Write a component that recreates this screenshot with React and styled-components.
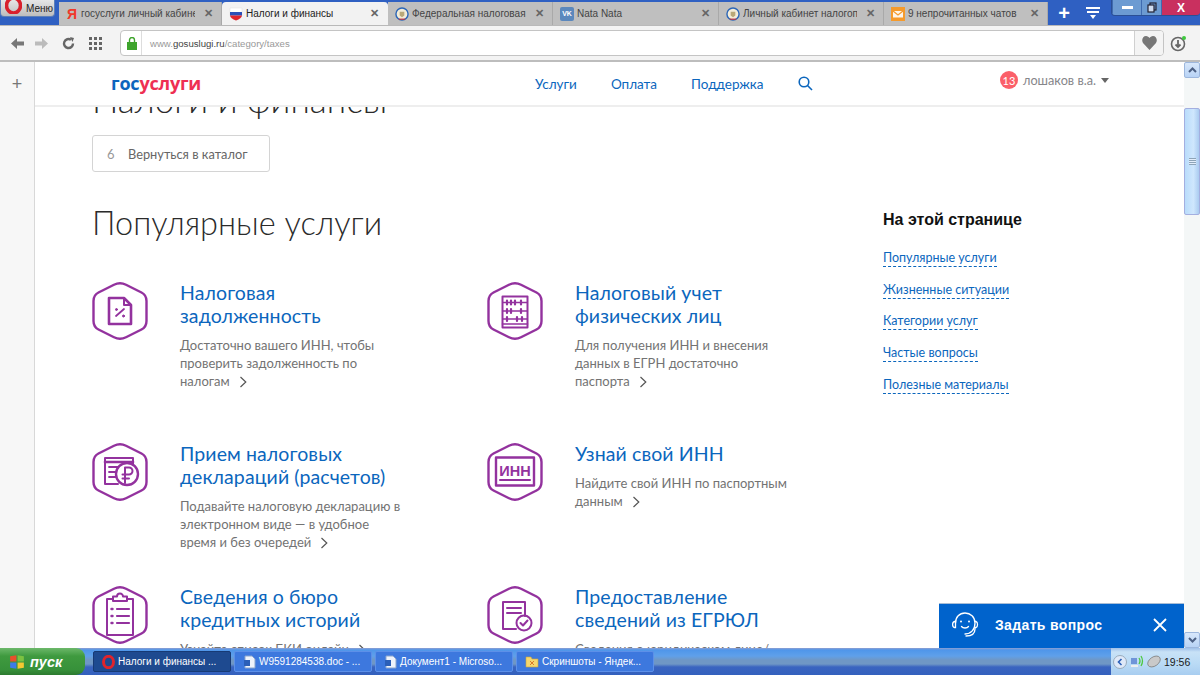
import React from 'react';
import styled, { createGlobalStyle } from 'styled-components';

const Global = createGlobalStyle`
  html, body { margin: 0; padding: 0; width: 1200px; height: 675px; overflow: hidden; background: #fff; }
  * { box-sizing: border-box; }
`;

const Screen = styled.div`
  width: 1200px; height: 675px; display: flex; flex-direction: column; overflow: hidden;
  font-family: "Liberation Sans", Arial, sans-serif; position: relative;
`;

/* ---------- browser chrome ---------- */
const TabBar = styled.div`
  height: 26px; flex: none; display: flex; align-items: flex-end; background: #2f60c2;
  border-bottom: 1px solid #b9b9b9;
`;
const MenuButton = styled.div`
  width: 55px; height: 17px; align-self: flex-start; flex: none; display: flex; align-items: center; gap: 4px;
  background: linear-gradient(#e6e6e6, #bdbdbd); border: 1px solid #5d7fb8; border-top: 0; border-radius: 0 0 4px 4px;
  font-size: 10px; color: #222; padding-left: 4px; margin-right: 4px; overflow: hidden;
`;
const Tab = styled.div`
  width: ${p => p.$w}px; height: 23px; flex: none; display: flex; align-items: center; padding: 0 8px 0 7px; gap: 3px;
  background: ${p => (p.$active ? '#f2f2f2' : '#bfbfbf')};
  border-right: 1px solid ${p => (p.$active ? '#f2f2f2' : '#a9a9a9')};
  border-radius: ${p => (p.$active ? '4px 4px 0 0' : '0')};
  color: ${p => (p.$active ? '#222' : '#444')}; font-size: 10px; white-space: nowrap;
`;
const TabTitle = styled.span`flex: 1; min-width: 0; overflow: hidden; margin-right: 6px;`;
const TabClose = styled.span`font-size: 11px; font-weight: 700; color: #666; line-height: 1; flex: none;`;
const FaviconBox = styled.span`
  width: ${p => p.$w || 14}px; height: 14px; flex: none; display: flex; align-items: center; justify-content: center;
  border-radius: 2px; font-size: ${p => p.$size || 8}px; font-weight: 700; color: ${p => p.$fg || '#fff'}; background: ${p => p.$bg || 'transparent'};
`;
const NewTab = styled.span`
  width: 30px; margin-left: 1px; text-align: center; color: #fff; font-size: 20px; font-weight: 700; line-height: 22px; height: 23px;
`;
const TabMenu = styled.span`width: 28px; height: 23px; display: flex; align-items: center; justify-content: center;`;
const WindowButtons = styled.div`
  margin-left: auto; align-self: flex-start; display: flex; height: 16px; flex: none; border-radius: 0 0 4px 4px; overflow: hidden;
  border: 1px solid #2a4f95; border-top: 0; border-right: 0;
`;
const WinBtn = styled.div`
  width: ${p => p.$w}px; display: flex; align-items: center; justify-content: center; color: #fff; font-weight: 700; font-size: 12px;
  background: ${p => p.$bg}; border-left: 1px solid #3f6bb0;
`;

const AddressRow = styled.div`
  height: 36px; flex: none; display: flex; align-items: center; background: #f3f3f3; border-bottom: 2px solid #bdbdbd;
  padding: 0 8px 0 0;
`;
const NavIcons = styled.div`width: 120px; flex: none; display: flex; align-items: center; padding-left: 11px; gap: 11px;`;
const Field = styled.div`
  flex: 1; height: 26px; display: flex; align-items: center; background: #fff; border: 1px solid #c4c4c4; border-radius: 4px; overflow: hidden;
  font-size: 9.6px; color: #999;
`;
const Lock = styled.span`width: 20px; height: 100%; display: flex; align-items: center; justify-content: center; border-right: 1px solid #ddd; margin-left: 1px;`;
const Url = styled.span`padding-left: 8px; b { color: #444; font-weight: 400; }`;
const Heart = styled.span`
  margin-left: auto; width: 29px; height: 100%; display: flex; align-items: center; justify-content: center;
  background: #f4f4f4; border-left: 1px solid #d0d0d0;
`;
const UpdateIcon = styled.span`width: 28px; flex: none; display: flex; justify-content: center; margin-left: 0;`;

/* ---------- window body ---------- */
const Body = styled.div`flex: 1; min-height: 0; display: flex; position: relative;`;
const SidePanel = styled.div`
  width: 35px; flex: none; background: #f7f7f7; border-right: 1px solid #d8d8d8; display: flex; justify-content: center;
  padding-top: 9px; color: #777; font-size: 18px; line-height: 26px;
`;
const Page = styled.div`flex: 1; min-width: 0; position: relative; overflow: hidden; background: #fff; font-family: Lato, "Open Sans", sans-serif;`;
const Header = styled.header`
  position: absolute; left: 0; right: 0; top: 0; height: 45px; background: #fff; border-bottom: 2px solid #eeeeee; z-index: 2;
  display: flex; align-items: center; padding: 0 0 0 76px;
`;
const Logo = styled.div`
  font-family: "Open Sans", sans-serif; font-weight: 700; font-size: 18px; letter-spacing: -0.2px; width: 424px; flex: none; margin-top: -1px; color: #ee2f53;
  span { color: #0d65bd; }
`;
const NavLink = styled.a`
  font-size: 13.5px; color: #0b66bd; margin-right: 34px;
`;
const SearchIcon = styled.span`display: flex; width: 200px; flex: none;`;
const User = styled.div`display: flex; align-items: center; color: #86868a; font-size: 12.7px; position: absolute; left: 965px; top: 9px;`;
const Badge = styled.span`
  width: 18px; height: 18px; border-radius: 50%; background: #fb5f69; color: #fff; font-size: 11px; display: flex; align-items: center; justify-content: center; margin-right: 5px;
`;
const Caret = styled.span`
  width: 0; height: 0; border: 4px solid transparent; border-top: 5px solid #666; border-bottom: 0; margin-left: 5px;
`;

const Content = styled.main`padding: 17px 0 0 57px; display: flex;`;
const MainCol = styled.div`width: 791px; flex: none;`;
const H1 = styled.h1`
  margin: 0; font-weight: 300; font-size: 35px; line-height: 40px; color: #2b2b2b; white-space: nowrap;
`;
const H2 = styled.h2`
  margin: 0; font-weight: 300; font-size: 32.5px; line-height: 38px; color: #2b2b2b; white-space: nowrap;
`;
const BackButton = styled.div`
  width: 178px; height: 37px; margin: 16px 0 32px; border: 1px solid #d4d4d4; border-radius: 3px; display: flex; align-items: center;
  font-size: 12.8px; color: #666; padding-left: 14px;
  i { font-style: normal; color: #999; width: 21px; font-size: 13px; }
`;
const Grid = styled.div`
  margin-top: 39px; display: grid; grid-template-columns: 395px 395px; grid-template-rows: 161px 143px auto;
`;
const Item = styled.article`display: flex; align-items: flex-start;`;
const HexWrap = styled.span`width: 88px; flex: none; display: block;`;
const ItemText = styled.div`width: 230px; flex: none;`;
const ItemTitle = styled.a`display: block; font-size: 19.5px; line-height: 23px; color: #0b66bd; margin-bottom: 9px; letter-spacing: 0.1px;`;
const ItemDesc = styled.p`margin: 0; font-size: 13px; line-height: 18px; color: #737373; white-space: nowrap;`;
const Chevron = styled.svg`width: 8px; height: 12px; margin-left: 9px; vertical-align: -2px;`;

const Aside = styled.aside`padding-top: 132px; width: 200px; flex: none;`;
const AsideTitle = styled.div`font-family: "Liberation Sans", sans-serif; font-size: 16px; font-weight: 700; color: #111; line-height: 18px; margin-bottom: 20px;`;
const AsideList = styled.div`display: flex; flex-direction: column; gap: 13.7px; align-items: flex-start;`;
const AsideLink = styled.a`font-size: 12.5px; line-height: 18px; color: #0b66bd; border-bottom: 1px dashed #0b66bd; height: 18px;`;

const Scrollbar = styled.div`
  width: 16px; flex: none; background: #f4f7f7; display: flex; flex-direction: column; justify-content: space-between; position: relative;
`;
const ScrollBtn = styled.div`
  height: 16px; background: linear-gradient(#d8e8fb, #b8d3f5); border: 1px solid #9db7dd; border-radius: 2px; display: flex; align-items: center; justify-content: center;
`;
const Thumb = styled.div`
  position: absolute; left: 0; right: 0; top: 46px; height: 107px; background: linear-gradient(90deg, #b9dcfb, #cfe7fd 60%, #aacbf0);
  border: 1px solid #a3afe0; border-radius: 2px; display: flex; align-items: center; justify-content: center;
`;
const Grip = styled.div`width: 7px; height: 7px; background: repeating-linear-gradient(#8da4b8 0 1px, #e3eefb 1px 2px);`;

const Chat = styled.div`
  position: absolute; left: 939px; top: 541px; width: 245px; height: 45px; background: #0063cc; color: #fff; z-index: 3; display: flex; align-items: center; padding: 0 0 2px 12px;
  font-size: 14px; font-weight: 700; letter-spacing: 0.35px;
  border-top: 1px solid #a8bdd6;
`;
const ChatText = styled.span`margin-left: 16px; flex: 1;`;
const ChatClose = styled.svg`width: 14px; height: 14px; margin-right: 17px;`;

/* ---------- taskbar ---------- */
const Taskbar = styled.footer`
  height: 27px; flex: none; display: flex; align-items: center;
  background: linear-gradient(#8f9fd0 0, #4f96ea 2px, #5fa0ea 8px, #6f97c5 12px, #6f97c5 16px, #3a64c0 19px, #3360bd 100%);
`;
const Start = styled.div`
  width: 85px; height: 100%; flex: none; display: flex; align-items: center; gap: 5px; padding-left: 9px; color: #fff; font-weight: 700; font-style: italic; font-size: 14.5px;
  background: linear-gradient(#6cb86a, #3f9a3f 30%, #37913a 80%, #2c7a2f); border-radius: 0 9px 9px 0;
`;
const TaskBtn = styled.div`
  width: 138px; height: 21px; margin-right: 3px; flex: none; display: flex; align-items: center; gap: 3px; padding-left: 8px; color: #fff; font-size: 10px; white-space: nowrap; overflow: hidden;
  background: ${p => (p.$active ? '#1e4a90' : '#3d78de')}; border-radius: 2px; border: 1px solid ${p => (p.$active ? '#173a75' : '#5d90e8')};
`;
const Tray = styled.div`
  margin-left: auto; width: 89px; height: 100%; flex: none; display: flex; align-items: center; padding-left: 2px; gap: 3px; color: #1a1a1a; font-size: 10.5px;
  background: linear-gradient(#9fbfe8, #c8e2f7 4px, #b9daf5 60%, #a8cdf0);
`;
const Clock = styled.span`margin-left: auto; margin-right: 12px;`;

/* ---------- icons ---------- */
const P = '#93329e';
const HEX = 'M22 3.8Q28 .8 34 3.8L49.5 11.5Q54.5 14 54.5 20V40Q54.5 46 49.5 48.5L34 56.2Q28 59.2 22 56.2L6.5 48.5Q1.5 46 1.5 40V20Q1.5 14 6.5 11.5Z';
const Hex = ({ children }) => (
  <svg width="56" height="60" viewBox="0 0 56 60" fill="none" stroke={P} strokeWidth="2.4" strokeLinejoin="round" strokeLinecap="round" style={{ display: 'block' }}>
    <path d={HEX} />
    {children}
  </svg>
);
const Percent = () => (
  <Hex>
    <path d="M17 17H32L39 24V43H17Z" strokeWidth="2.6" /><path d="M32 17V24H39" strokeWidth="2" />
    <path d="M24 35L32 28" strokeWidth="1.8" /><circle cx="24.5" cy="28.5" r="1" fill={P} strokeWidth="1" /><circle cx="31.5" cy="35" r="1" fill={P} strokeWidth="1" />
  </Hex>
);
const Abacus = () => (
  <Hex>
    <rect x="15.5" y="15.5" width="25" height="31" strokeWidth="2" />
    <path d="M16 21.5H40M16 30H40M16 38H40" strokeWidth="1.3" />
    <path d="M20 19.5V23.5M24 19.5V23.5M28 19.5V23.5M34 19.5V23.5M20 28V32M24 28V32M34 28V32M20 36V40M30 36V40M35 36V40" strokeWidth="2.2" />
    <path d="M15.5 43H40.5" strokeWidth="1.6" />
  </Hex>
);
const Declaration = () => (
  <Hex>
    <path d="M26 42H13V16H41V22" strokeWidth="2" />
    <path d="M13 20H41" strokeWidth="2.6" />
    <path d="M17 25H26M17 30H24M17 35H24" strokeWidth="1.8" />
    <circle cx="35" cy="32" r="11" strokeWidth="2.4" />
    <path d="M33 41V25.5H37A3.5 3.5 0 0 1 37 32.5H30.5M30.5 36.5H37" strokeWidth="2" />
  </Hex>
);
const HexLabel = styled.text`font-family: "Liberation Sans", sans-serif; font-weight: 700; font-size: 14.5px; fill: ${P}; stroke: none;`;
const Inn = () => (
  <Hex>
    <rect x="9" y="15.5" width="38" height="28" strokeWidth="2.4" />
    <HexLabel x="28" y="33.5" textAnchor="middle">ИНН</HexLabel>
    <path d="M13 38H43" strokeWidth="2" />
  </Hex>
);
const Clipboard = () => (
  <Hex>
    <path d="M20 14H15V50H41V14H36" strokeWidth="2" />
    <path d="M21 16V11.5H25A3 3 0 0 1 31 11.5H35V16Z" strokeWidth="2" />
    <path d="M19.5 24H20.5M19.5 31H20.5M19.5 38H20.5" strokeWidth="2.4" />
    <path d="M25 24H37M25 31H37M25 38H37" strokeWidth="2.2" />
  </Hex>
);
const Certificate = () => (
  <Hex>
    <path d="M29 44H16V17H38V31" strokeWidth="2" />
    <path d="M20 23H34M20 28H34" strokeWidth="2" />
    <circle cx="37" cy="38" r="7.5" strokeWidth="2" />
    <path d="M33.5 38L36 40.5L40.5 35.5" strokeWidth="2" />
  </Hex>
);
const Chev = () => (
  <Chevron viewBox="0 0 8 12" fill="none" stroke="#555" strokeWidth="1.2"><path d="M1.5 1L6.8 6L1.5 11" /></Chevron>
);
const Headset = () => (
  <svg width="28" height="28" viewBox="0 0 28 28" fill="none" stroke="#fff" strokeWidth="1.3" strokeLinecap="round">
    <path d="M4.5 12C4.5 6 8.5 2 14 2S24 6 24 12C24 18.5 20 23 14 23" />
    <path d="M4.5 10.5H3.5C1 11 1 16 3.5 16.5H4.5Z" />
    <path d="M24 10.5H25C27 11 27 16 25 16.5H24V18C24 22 21 25 15 25" />
    <circle cx="10" cy="10.5" r="1" fill="#fff" stroke="none" /><circle cx="18" cy="10.5" r="1" fill="#fff" stroke="none" />
    <path d="M10.5 15.5C12 17.5 16 17.5 17.5 15.5" />
  </svg>
);
const FlagIcon = () => (
  <svg width="14" height="14" viewBox="0 0 14 14" style={{ flex: 'none' }}><path d="M1 1H13V8Q13 11.5 7 13.5Q1 11.5 1 8Z" fill="#fff" stroke="#ddd" strokeWidth=".5" /><path d="M1 5H13V8.6H1Z" fill="#2b50b8" /><path d="M1 8.6H13Q12.5 11.6 7 13.5Q1.5 11.6 1 8.6Z" fill="#e0242c" /></svg>
);
const FnsIcon = () => (
  <svg width="14" height="14" viewBox="0 0 15 15" style={{ flex: 'none' }}><circle cx="7.5" cy="7.5" r="6.5" fill="#f3ecd8" stroke="#2b66b8" strokeWidth="1.5" /><path d="M5 5H10V9L7.5 11L5 9Z" fill="#b9a878" /><path d="M4 13H11" stroke="#c9343c" strokeWidth="1.2" /></svg>
);
const MailIcon = () => (
  <svg width="14" height="14" viewBox="0 0 14 14" style={{ flex: 'none' }}><rect width="14" height="14" fill="#f59a2c" /><path d="M2 4H12V10.5H2Z" fill="#fff" opacity=".9" /><path d="M2 4L7 8L12 4" fill="none" stroke="#f59a2c" strokeWidth="1.2" /></svg>
);
const OperaO = () => (
  <svg width="17" height="17" viewBox="0 0 17 17" style={{ flex: 'none', marginTop: '-6px' }}><ellipse cx="8.5" cy="8.5" rx="7" ry="7.5" fill="none" stroke="#d8202c" strokeWidth="3.6" /></svg>
);
const SmallOpera = () => (
  <svg width="13" height="14" viewBox="0 0 13 14" style={{ flex: 'none' }}><ellipse cx="6.5" cy="7" rx="5" ry="5.7" fill="none" stroke="#e0242c" strokeWidth="3" /></svg>
);
const DocIcon = () => (
  <svg width="13" height="14" viewBox="0 0 13 14" style={{ flex: 'none' }}><path d="M2 1H9L12 4V13H2Z" fill="#eef3fb" stroke="#8aa4cc" /><path d="M1 5H7V11H1Z" fill="#2b5fb8" /></svg>
);
const FolderIcon = () => (
  <svg width="14" height="13" viewBox="0 0 14 13" style={{ flex: 'none' }}><path d="M1 2H6L7 4H13V12H1Z" fill="#f5d76e" stroke="#c9a53a" strokeWidth=".6" /><path d="M5 6L9 10M9 6L5 10" stroke="#d9792a" strokeWidth="1" /></svg>
);
const WinFlag = () => (
  <svg width="16" height="16" viewBox="0 0 14 14" style={{ flex: 'none' }}><path d="M1 2L6.5 1V6.5H1Z" fill="#e8502c" /><path d="M7.5 1L13 2V6.5H7.5Z" fill="#7cc242" /><path d="M1 7.5H6.5V13L1 12Z" fill="#3f7be8" /><path d="M7.5 7.5H13V12L7.5 13Z" fill="#f5c832" /></svg>
);

const tabs = [
  { w: 163, title: 'госуслуги личный кабинет', icon: <FaviconBox $fg="#f0382a" $w={12} $size={14}>Я</FaviconBox> },
  { w: 166, title: 'Налоги и финансы', icon: <FlagIcon />, active: true },
  { w: 165, title: 'Федеральная налоговая с', icon: <FnsIcon /> },
  { w: 166, title: 'Nata Nata', icon: <FaviconBox $bg="#5b88bd" $size={7}>VK</FaviconBox> },
  { w: 165, title: 'Личный кабинет налогопл', icon: <FnsIcon /> },
  { w: 164, title: '9 непрочитанных чатов', icon: <MailIcon /> },
];

const items = [
  { icon: <Percent />, title: ['Налоговая', 'задолженность'], desc: ['Достаточно вашего ИНН, чтобы', 'проверить задолженность по', 'налогам'] },
  { icon: <Abacus />, title: ['Налоговый учет', 'физических лиц'], desc: ['Для получения ИНН и внесения', 'данных в ЕГРН достаточно', 'паспорта'] },
  { icon: <Declaration />, title: ['Прием налоговых', 'деклараций (расчетов)'], desc: ['Подавайте налоговую декларацию в', 'электронном виде — в удобное', 'время и без очередей'] },
  { icon: <Inn />, title: ['Узнай свой ИНН'], desc: ['Найдите свой ИНН по паспортным', 'данным'] },
  { icon: <Clipboard />, title: ['Сведения о бюро', 'кредитных историй'], desc: ['Узнайте список БКИ онлайн'] },
  { icon: <Certificate />, title: ['Предоставление', 'сведений из ЕГРЮЛ'], desc: ['Сведения о юридическом лице/'], noChev: true },
];

const links = ['Популярные услуги', 'Жизненные ситуации', 'Категории услуг', 'Частые вопросы', 'Полезные материалы'];

export default function App() {
  return (
    <Screen>
      <Global />
      <TabBar>
        <MenuButton><OperaO />Меню</MenuButton>
        {tabs.map(t => (
          <Tab key={t.title} $w={t.w} $active={t.active}>
            {t.icon}
            <TabTitle>{t.title}</TabTitle>
            <TabClose>✕</TabClose>
          </Tab>
        ))}
        <NewTab>+</NewTab>
        <TabMenu>
          <svg width="14" height="13" viewBox="0 0 14 13" fill="#fff"><rect y="0" width="14" height="2" /><rect x="1" y="4" width="12" height="2" /><path d="M4 8H10L7 12Z" /></svg>
        </TabMenu>
        <WindowButtons>
          <WinBtn $w={29} $bg="#6c9bd2"><svg width="11" height="3"><rect width="11" height="3" fill="#fff" /></svg></WinBtn>
          <WinBtn $w={20} $bg="#6c9bd2"><svg width="10" height="11" viewBox="0 0 10 11" fill="none" stroke="#223" strokeWidth="1.2"><rect x="3" y="1" width="6" height="7" /><rect x="1" y="3" width="6" height="7" fill="#cfdcf0" /></svg></WinBtn>
          <WinBtn $w={39} $bg="#c9305f">X</WinBtn>
        </WindowButtons>
      </TabBar>

      <AddressRow>
        <NavIcons>
          <svg width="13" height="11" viewBox="0 0 13 11" fill="#777"><path d="M6 0L0 5.5L6 11V7.5H13V3.5H6Z" /></svg>
          <svg width="13" height="11" viewBox="0 0 13 11" fill="#bbb"><path d="M7 0L13 5.5L7 11V7.5H0V3.5H7Z" /></svg>
          <svg width="13" height="13" viewBox="0 0 13 13" fill="none" stroke="#666" strokeWidth="2.4" style={{ marginLeft: 3 }}><path d="M11 6.5A4.5 4.5 0 1 1 9 2.8" /><path d="M8 0L12 1L10.5 5Z" fill="#666" stroke="none" /></svg>
          <svg width="13" height="13" viewBox="0 0 13 13" fill="#666" style={{ marginLeft: 3 }}><rect width="3" height="3" /><rect x="5" width="3" height="3" /><rect x="10" width="3" height="3" /><rect y="5" width="3" height="3" /><rect x="5" y="5" width="3" height="3" /><rect x="10" y="5" width="3" height="3" /><rect y="10" width="3" height="3" /><rect x="5" y="10" width="3" height="3" /><rect x="10" y="10" width="3" height="3" /></svg>
        </NavIcons>
        <Field>
          <Lock><svg width="10" height="13" viewBox="0 0 10 13"><rect y="5" width="10" height="8" fill="#3ea42c" /><path d="M2.5 5V3A2.5 2.5 0 0 1 7.5 3V5" fill="none" stroke="#3ea42c" strokeWidth="1.4" /></svg></Lock>
          <Url>www.<b>gosuslugi.ru</b>/category/taxes</Url>
          <Heart><svg width="15" height="14" viewBox="0 0 15 14" fill="#777"><path d="M7.5 14L1 7C-1 4 1 0 4 0C5.5 0 6.8 1 7.5 2C8.2 1 9.5 0 11 0C14 0 16 4 14 7Z" /></svg></Heart>
        </Field>
        <UpdateIcon>
          <svg width="17" height="17" viewBox="0 0 17 17" fill="none"><circle cx="8" cy="9" r="6.5" stroke="#666" strokeWidth="1.6" /><path d="M8 5V12M5.5 9.5L8 12L10.5 9.5" stroke="#666" strokeWidth="1.8" /><circle cx="14" cy="3" r="2" fill="#3ec93e" /></svg>
        </UpdateIcon>
      </AddressRow>

      <Body>
        <SidePanel>+</SidePanel>
        <Page>
          <Header>
            <Logo><span>гос</span>услуги</Logo>
            <NavLink>Услуги</NavLink>
            <NavLink>Оплата</NavLink>
            <NavLink>Поддержка</NavLink>
            <SearchIcon>
              <svg width="15" height="15" viewBox="0 0 15 15" fill="none" stroke="#0b66bd" strokeWidth="1.6"><circle cx="6" cy="6" r="4.8" /><path d="M9.5 9.5L14 14" /></svg>
            </SearchIcon>
            <User><Badge>13</Badge>лошаков в.а.<Caret /></User>
          </Header>
          <Content>
            <MainCol>
              <H1>Налоги и финансы</H1>
              <BackButton><i>6</i>Вернуться в каталог</BackButton>
              <H2>Популярные услуги</H2>
              <Grid>
                {items.map(it => (
                  <Item key={it.title[0]}>
                    <HexWrap>{it.icon}</HexWrap>
                    <ItemText>
                      <ItemTitle>{it.title.map(l => <div key={l}>{l}</div>)}</ItemTitle>
                      <ItemDesc>
                        {it.desc.map((l, i) => (
                          <React.Fragment key={l}>
                            {l}{i === it.desc.length - 1 ? (it.noChev ? null : <Chev />) : <br />}
                          </React.Fragment>
                        ))}
                      </ItemDesc>
                    </ItemText>
                  </Item>
                ))}
              </Grid>
            </MainCol>
            <Aside>
              <AsideTitle>На этой странице</AsideTitle>
              <AsideList>{links.map(l => <AsideLink key={l}>{l}</AsideLink>)}</AsideList>
            </Aside>
          </Content>
        </Page>
        <Scrollbar>
          <ScrollBtn><svg width="9" height="6" fill="none" stroke="#4d6185" strokeWidth="2"><path d="M1 5L4.5 1.5L8 5" /></svg></ScrollBtn>
          <Thumb><Grip /></Thumb>
          <ScrollBtn><svg width="9" height="6" fill="none" stroke="#4d6185" strokeWidth="2"><path d="M1 1L4.5 4.5L8 1" /></svg></ScrollBtn>
        </Scrollbar>
        <Chat>
          <Headset />
          <ChatText>Задать вопрос</ChatText>
          <ChatClose viewBox="0 0 14 14" fill="none" stroke="#fff" strokeWidth="1.8"><path d="M1 1L13 13M13 1L1 13" /></ChatClose>
        </Chat>
      </Body>

      <Taskbar>
        <Start><WinFlag />пуск</Start>
        <span style={{ width: 8, flex: 'none' }} />
        <TaskBtn $active><SmallOpera />Налоги и финансы ...</TaskBtn>
        <TaskBtn><DocIcon />W9591284538.doc - ...</TaskBtn>
        <TaskBtn><DocIcon />Документ1 - Microso...</TaskBtn>
        <TaskBtn><FolderIcon />Скриншоты - Яндек...</TaskBtn>
        <Tray>
          <svg width="14" height="14" viewBox="0 0 14 14" style={{ flex: 'none' }}><circle cx="7" cy="7" r="6.5" fill="#dfe9f8" stroke="#9ab" /><path d="M8.5 4L5.5 7L8.5 10" fill="none" stroke="#2b5fb8" strokeWidth="1.6" /></svg>
          <svg width="14" height="14" viewBox="0 0 14 14" style={{ flex: 'none' }}><rect x="1" y="3" width="6" height="6" fill="#6f95d8" /><rect x="1" y="10" width="7" height="2" fill="#eee" /><path d="M9 3Q11 6 9 9M11 1Q14 6 11 11" fill="none" stroke="#4fc93f" strokeWidth="1.3" /></svg>
          <svg width="14" height="13" viewBox="0 0 14 13" style={{ flex: 'none' }}><ellipse cx="7" cy="6.5" rx="7" ry="4.5" transform="rotate(-35 7 6.5)" fill="#c9c9c9" stroke="#777" strokeWidth=".7" /></svg>
          <Clock>19:56</Clock>
        </Tray>
      </Taskbar>
    </Screen>
  );
}
